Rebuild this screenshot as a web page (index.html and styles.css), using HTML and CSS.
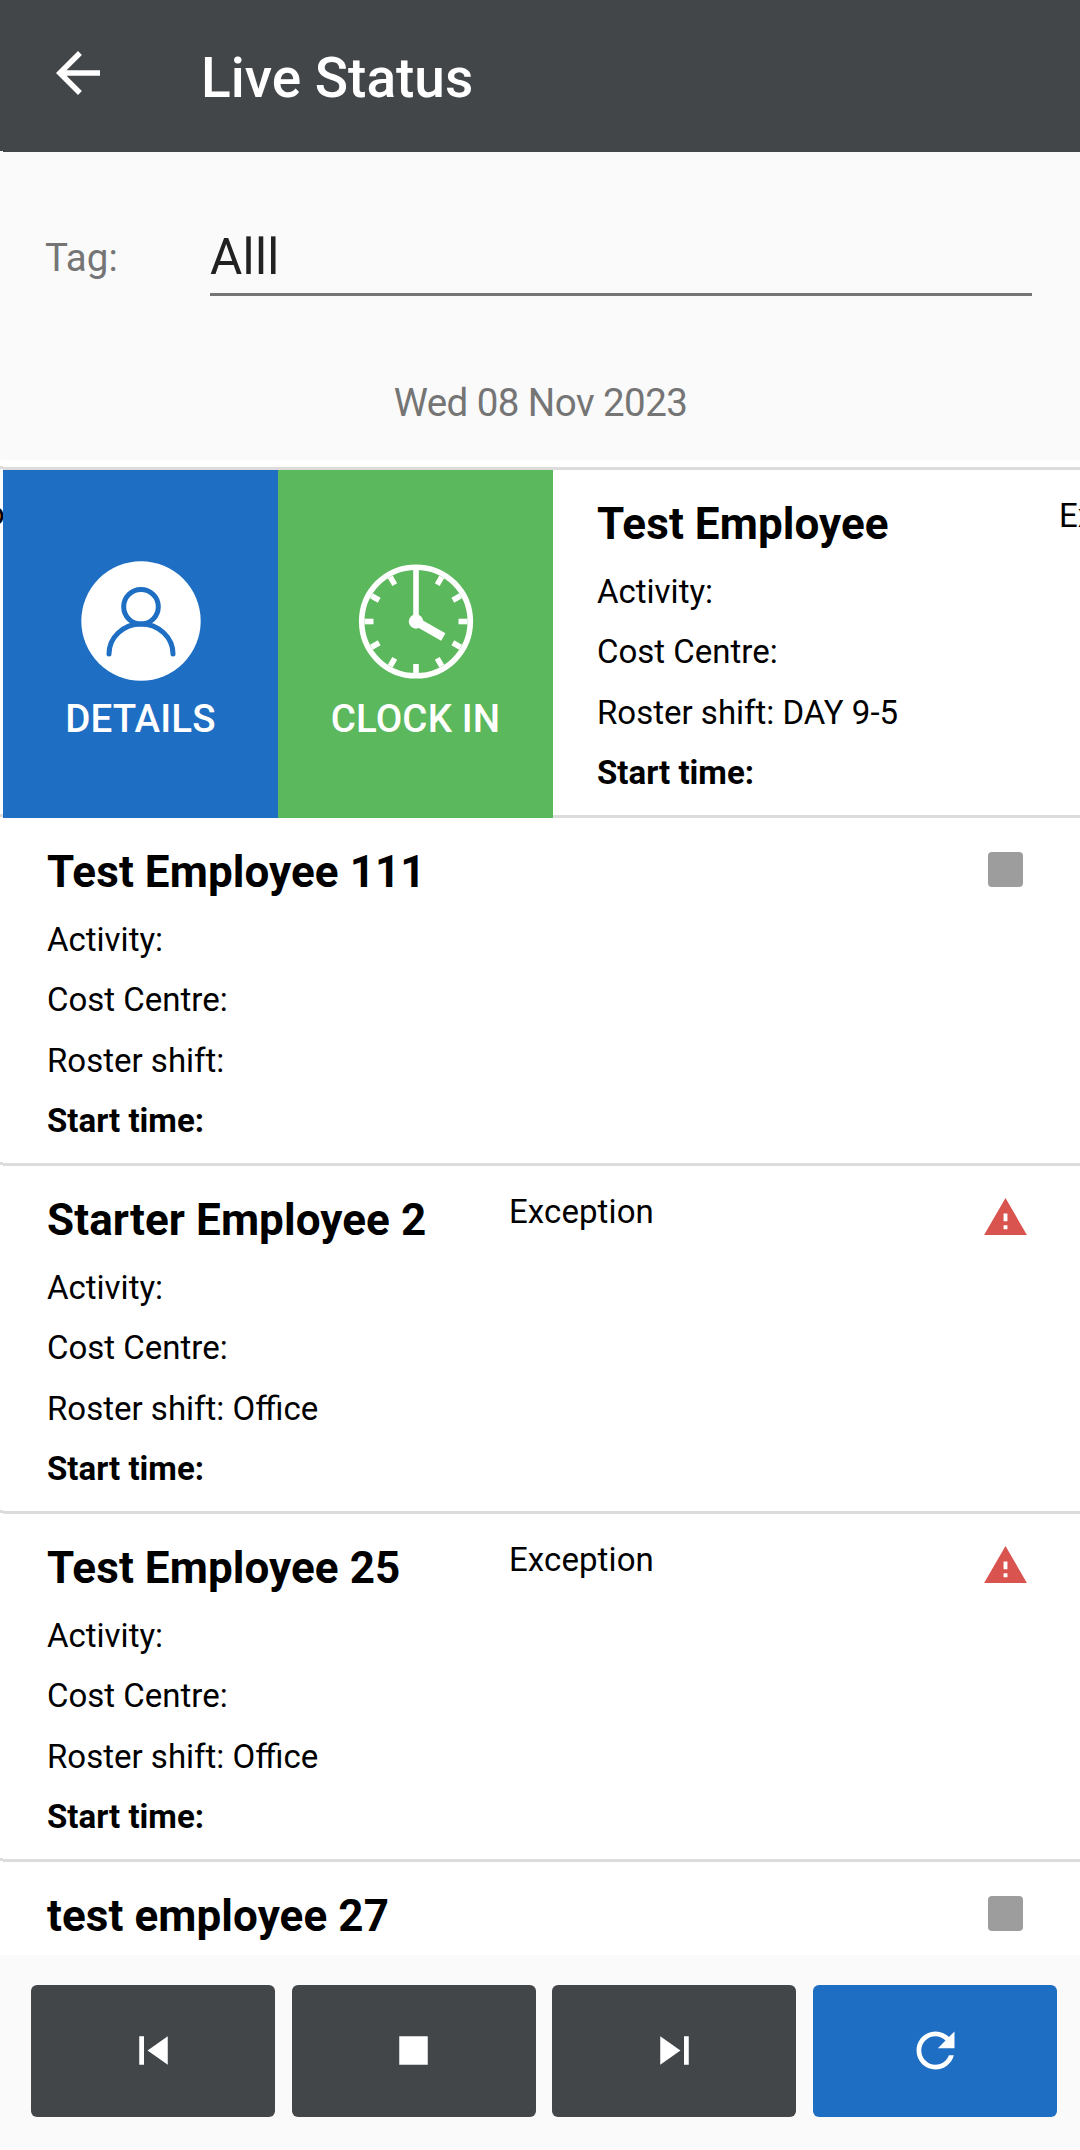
FILE: index.html
```
<!DOCTYPE html>
<html lang="en">
<head>
  <meta charset="UTF-8">
  <meta name="viewport" content="width=device-width, initial-scale=1.0">
  <title>Live Status</title>
  <link rel="stylesheet" href="styles.css">
</head>
<body>

<div class="app">
  <header class="toolbar">
    <svg class="back-icon" viewBox="4 4 16 16"><path d="M20 11H7.83l5.59-5.59L12 4l-8 8 8 8 1.41-1.41L7.83 13H20v-2z"/></svg>
    <h1 class="title">Live Status</h1>
  </header>

  <div class="filter">
    <span class="filter-label">Tag:</span>
    <div class="filter-input">Alll</div>
  </div>
  <div class="date">Wed 08 Nov 2023</div>

  <!-- Employee list -->
  <div class="list">
    <!-- Row swiped open, actions on the left -->
    <div class="row swiped">
      <div class="actions">
        <div class="action details">
          <svg class="action-icon" viewBox="0 0 120 120">
            <circle cx="60" cy="60" r="59.7" fill="#fff"/>
            <g fill="none" stroke="#1e6ec3" stroke-width="5" stroke-linecap="round">
              <circle cx="60" cy="45.7" r="17.3"/>
              <path d="M28 93a32 30 0 0 1 64 0"/>
            </g>
          </svg>
          <span>DETAILS</span>
        </div>
        <div class="action clock-in">
          <svg class="action-icon" viewBox="0 0 120 120">
            <g fill="none" stroke="#fff" stroke-width="5.6">
              <circle cx="60" cy="60.5" r="54.3"/>
              <path d="M60 60.5V8"/>
              <path id="tick" d="M60 103v9"/>
              <use href="#tick" transform="rotate(30 60 60.5)"/>
              <use href="#tick" transform="rotate(60 60 60.5)"/>
              <use href="#tick" transform="rotate(90 60 60.5)"/>
              <use href="#tick" transform="rotate(120 60 60.5)"/>
              <use href="#tick" transform="rotate(150 60 60.5)"/>
              <use href="#tick" transform="rotate(210 60 60.5)"/>
              <use href="#tick" transform="rotate(240 60 60.5)"/>
              <use href="#tick" transform="rotate(270 60 60.5)"/>
              <use href="#tick" transform="rotate(300 60 60.5)"/>
              <use href="#tick" transform="rotate(330 60 60.5)"/>
              <path d="M60 60.5l27.3 15.5" stroke-width="8.5"/>
            </g>
            <circle cx="60" cy="60.5" r="7.2" fill="#fff"/>
          </svg>
          <span>CLOCK IN</span>
        </div>
      </div>
      <div class="card">
        <div class="info">
          <h2 class="name">Test Employee</h2>
          <p>Activity:</p>
          <p>Cost Centre:</p>
          <p>Roster shift: DAY 9-5</p>
          <p class="start">Start time:</p>
        </div>
        <div class="exception">Exception</div>
      </div>
    </div>

    <div class="row">
      <div class="card">
        <div class="info">
          <h2 class="name">Test Employee 111</h2>
          <p>Activity:</p>
          <p>Cost Centre:</p>
          <p>Roster shift:</p>
          <p class="start">Start time:</p>
        </div>
        <div class="exception"></div>
        <div class="status"><div class="status-off"></div></div>
      </div>
    </div>

    <div class="row">
      <div class="card">
        <div class="info">
          <h2 class="name">Starter Employee 2</h2>
          <p>Activity:</p>
          <p>Cost Centre:</p>
          <p>Roster shift: Office</p>
          <p class="start">Start time:</p>
        </div>
        <div class="exception">Exception</div>
        <div class="status"><svg class="warning" viewBox="1 2 22 19"><path d="M1 21h22L12 2 1 21zm12-3h-2v-2h2v2zm0-4h-2v-4h2v4z"/></svg></div>
      </div>
    </div>

    <div class="row">
      <div class="card">
        <div class="info">
          <h2 class="name">Test Employee 25</h2>
          <p>Activity:</p>
          <p>Cost Centre:</p>
          <p>Roster shift: Office</p>
          <p class="start">Start time:</p>
        </div>
        <div class="exception">Exception</div>
        <div class="status"><svg class="warning" viewBox="1 2 22 19"><path d="M1 21h22L12 2 1 21zm12-3h-2v-2h2v2zm0-4h-2v-4h2v4z"/></svg></div>
      </div>
    </div>

    <div class="row">
      <div class="card">
        <div class="info">
          <h2 class="name">test employee 27</h2>
        </div>
        <div class="exception"></div>
        <div class="status"><div class="status-off"></div></div>
      </div>
    </div>
  </div>

  <!-- Bottom controls -->
  <footer class="controls">
    <div class="btn"><svg viewBox="0 0 24 24"><path d="M6 6h2v12H6zm3.5 6l8.5 6V6z"/></svg></div>
    <div class="btn"><svg viewBox="0 0 24 24"><path d="M6 6h12v12H6z"/></svg></div>
    <div class="btn"><svg viewBox="0 0 24 24"><path d="M6 18l8.5-6L6 6v12zM16 6v12h2V6h-2z"/></svg></div>
    <div class="btn refresh"><svg viewBox="0 0 24 24"><path d="M17.65 6.35C16.2 4.9 14.21 4 12 4c-4.42 0-7.99 3.58-7.99 8s3.57 8 7.99 8c3.73 0 6.84-2.55 7.73-6h-2.08c-.82 2.33-3.04 4-5.65 4-3.31 0-6-2.69-6-6s2.69-6 6-6c1.66 0 3.14.69 4.22 1.78L13 11h7V4l-2.35 2.35z"/></svg></div>
  </footer>

  <!-- Sliver of the previous page on the left edge -->
  <div class="edge">
    <div class="edge-bar"></div>
    <div class="edge-head"></div>
    <div class="edge-row"><span class="edge-text">Exception</span></div>
    <div class="edge-row"></div>
    <div class="edge-row"></div>
    <div class="edge-row"></div>
    <div class="edge-row"></div>
  </div>
</div>

</body>
</html>
```
FILE: styles.css
```
* {
  box-sizing: border-box;
}

body {
  margin: 0;
  background-color: #fafafa;
  font-family: Roboto, "Liberation Sans", sans-serif;
}

h1, h2, p {
  margin: 0;
}

.app {
  position: relative;
  display: flex;
  flex-direction: column;
  width: 1080px;
  height: 2150px;
  overflow: hidden;
}

/* Top bar */
.toolbar {
  display: flex;
  align-items: flex-start;
  gap: 101px;
  height: 152px;
  padding: 45px 56px 0;
  background-color: #434649;
  color: #fff;
}

.back-icon {
  width: 44px;
  height: 44px;
  margin-top: 6px;
  fill: #fff;
}

.title {
  padding-top: 1px;
  font-size: 55px;
  font-weight: 500;
  line-height: 65px;
}

/* Tag filter */
.filter {
  display: flex;
  align-items: flex-start;
  height: 225px;
  padding: 72px 48px 0 45px;
}

.filter-label {
  width: 165px;
  padding-top: 11px;
  font-size: 38.5px;
  line-height: 45px;
  color: #757575;
}

.filter-input {
  flex: 1;
  height: 72px;
  border-bottom: 3px solid #757575;
  font-size: 49.5px;
  letter-spacing: 0.3px;
  line-height: 66px;
  color: #212121;
}

.date {
  height: 83px;
  padding-left: 1px;
  font-size: 38.5px;
  letter-spacing: -0.55px;
  line-height: 51px;
  text-align: center;
  color: #757575;
}

/* Employee rows */
.list {
  flex: 1;
  min-height: 0;
  padding-top: 7px;
  background-color: #fff;
  overflow: hidden;
}

.row {
  display: flex;
  height: 348px;
  border-top: 3px solid #dcdcdc;
  overflow: hidden;
}

.card {
  display: flex;
  flex: none;
  width: 1080px;
  padding: 26px 0 0 47px;
}

.info {
  width: 462px;
  padding-top: 2px;
}

.name {
  margin-bottom: 12px;
  font-size: 44px;
  font-weight: 700;
  letter-spacing: 0.08px;
  line-height: 52px;
}

.info p {
  font-size: 33px;
  line-height: 60.3px;
}

.info .start {
  font-weight: 700;
}

.exception {
  width: 439px;
  font-size: 33px;
  letter-spacing: 0.1px;
  line-height: 39px;
}

.status {
  display: flex;
  justify-content: center;
  width: 115px;
  padding-top: 6px;
}

.status-off {
  width: 35px;
  height: 35px;
  margin-top: 2px;
  border-radius: 4px;
  background-color: #9d9d9d;
}

.warning {
  width: 43px;
  height: 37px;
  fill: #d9534f;
}

/* Swiped row */
.swiped {
  height: 351px;
  margin-bottom: -3px;
  padding-left: 3px;
}

.actions {
  display: flex;
  position: relative;
  z-index: 1;
}

.swiped .card {
  padding-left: 44px;
}

.action {
  display: flex;
  flex-direction: column;
  align-items: center;
  width: 275px;
  padding-top: 91px;
  color: #fff;
  font-size: 38.5px;
  font-weight: 500;
  letter-spacing: 0.15px;
  line-height: 45px;
}

.action-icon {
  width: 120px;
  height: 120px;
  margin-bottom: 15px;
}

.details {
  background-color: #1e6ec3;
}

.clock-in {
  background-color: #5cb85c;
}

/* Bottom controls */
.controls {
  display: flex;
  gap: 16.67px;
  height: 195px;
  padding: 30px 23px 33px 31px;
}

.btn {
  display: flex;
  flex: 1;
  align-items: center;
  justify-content: center;
  padding-bottom: 1px;
  border-radius: 6px;
  background-color: #434649;
}

.btn svg {
  width: 57px;
  height: 57px;
  fill: #fff;
}

.refresh {
  background-color: #1e6ec3;
}

/* Left edge */
.edge {
  position: absolute;
  top: 0;
  left: 0;
  width: 3px;
  height: 1954px;
  background-color: #fff;
  overflow: hidden;
}

.edge-bar {
  height: 151px;
  background-color: #434649;
}

.edge-head {
  height: 315px;
  border-bottom: 7px solid #fff;
  background-color: #fafafa;
}

.edge-row {
  position: relative;
  height: 348px;
  border-top: 3px solid #dcdcdc;
}

.edge-text {
  position: absolute;
  top: 25px;
  left: -121px;
  font-size: 33px;
  line-height: 39px;
}
```
